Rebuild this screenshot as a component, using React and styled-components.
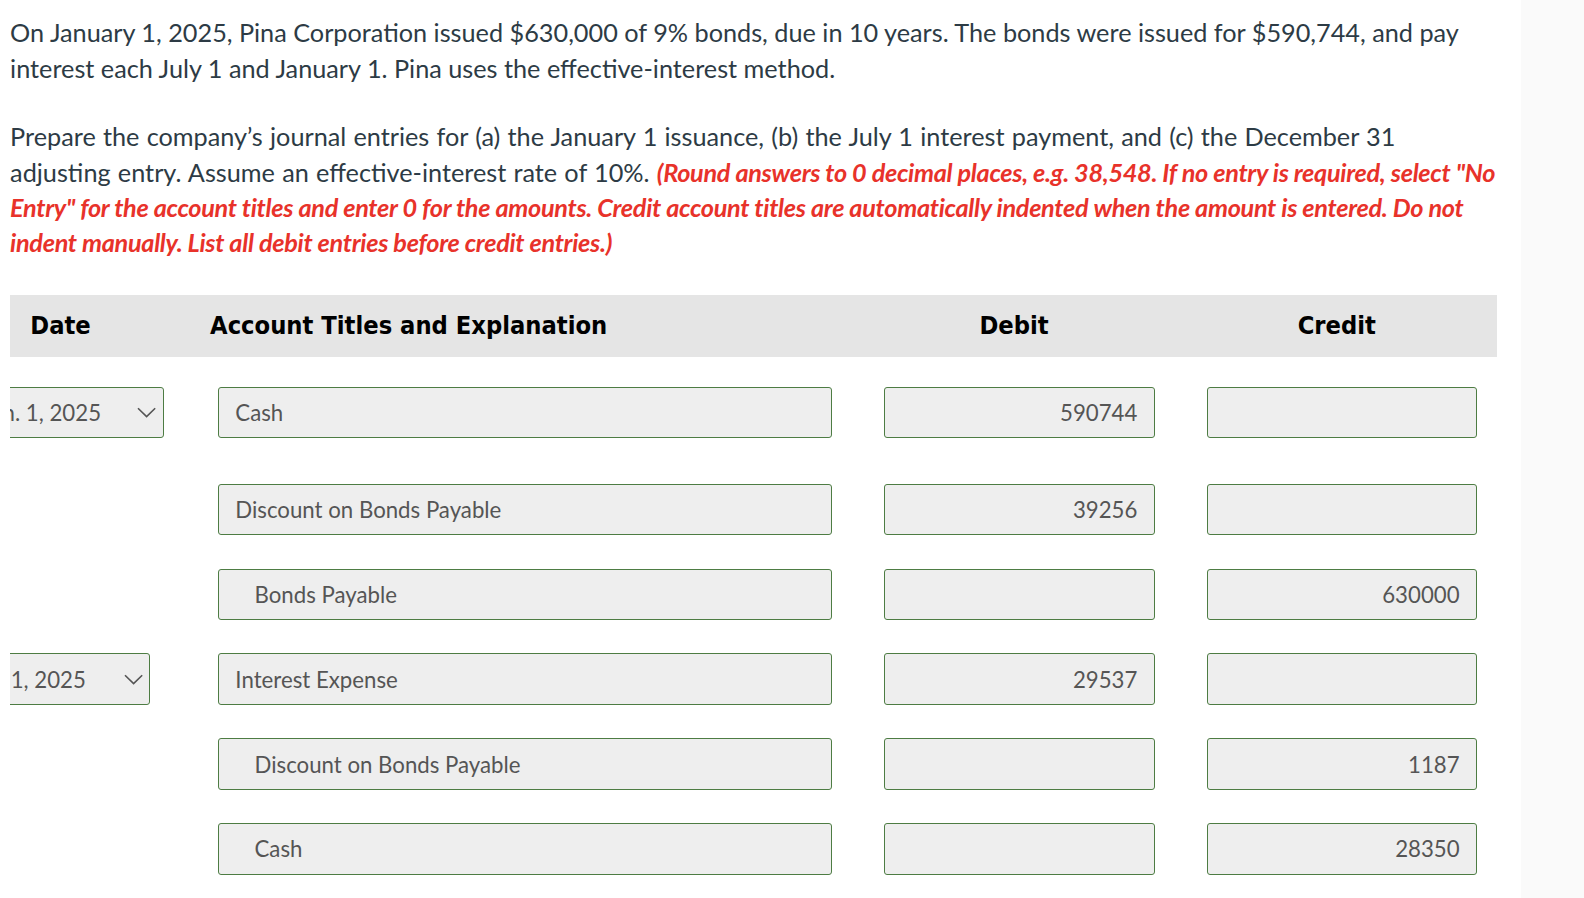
import React from 'react';
import styled, { createGlobalStyle } from 'styled-components';

const GlobalStyle = createGlobalStyle`
  html, body {
    margin: 0;
    padding: 0;
    background: #ffffff;
    overflow: hidden;
  }
  body {
    font-family: Lato, "Open Sans", sans-serif;
  }
`;

const Page = styled.div`
  zoom: 1.0101;
  display: flex;
  height: 898px;
  overflow: hidden;
`;

const Main = styled.div`
  width: 1496px;
  padding: 15px 0 0 10px;
  background: #ffffff;
`;

const SideStrip = styled.div`
  flex: 1;
  background: #fafafa;
`;

const Paragraph = styled.p`
  margin: 0 0 33px 0;
  width: 1472px;
  font-size: 25px;
  line-height: 35px;
  color: #2d3b45;
  word-spacing: ${(p) => (p.$loose ? '0.75px' : '0')};
`;

const Note = styled.span`
  color: #e8322a;
  font-weight: 700;
  font-style: italic;
  letter-spacing: -0.3px;
  word-spacing: 0;
`;

const Table = styled.div`
  width: 1472px;
  margin-top: 34px;
`;

const HeaderRow = styled.div`
  display: grid;
  grid-template-columns: 198px 662px 268px 52px 267px;
  align-items: center;
  height: 61px;
  background: #e5e5e5;
`;

const HeaderCell = styled.div`
  font-family: "DejaVu Sans Condensed", "DejaVu Sans", sans-serif;
  font-weight: 700;
  font-size: 25px;
  color: #000000;
  padding-left: ${(p) => (p.$first ? '20px' : '0')};
  text-align: ${(p) => (p.$center ? 'center' : 'left')};
  grid-column: ${(p) => p.$col || 'auto'};
`;

const Rows = styled.div`
  display: flex;
  flex-direction: column;
  gap: 33px;
  padding-top: 30px;
`;

const Row = styled.div`
  display: grid;
  grid-template-columns: 206px 608px 51px 268px 52px 267px;
  align-items: center;
  margin-bottom: ${(p) => (p.$extra ? '12px' : '0')};
`;

const DateCell = styled.div`
  width: ${(p) => p.$width}px;
  display: flex;
  justify-content: flex-end;
  overflow: hidden;
`;

const DateSelect = styled.div`
  flex-shrink: 0;
  display: flex;
  align-items: center;
  gap: ${(p) => p.$gap}px;
  height: 51px;
  box-sizing: border-box;
  padding: 0 6px 0 14px;
  border: 1px solid #4d7c43;
  border-radius: 3px;
  background: #eeeeee;
  font-size: 22px;
  color: #555555;
  white-space: nowrap;
`;

const Field = styled.div`
  grid-column: ${(p) => p.$col};
  height: 51px;
  box-sizing: border-box;
  display: flex;
  align-items: center;
  justify-content: ${(p) => (p.$number ? 'flex-end' : 'flex-start')};
  padding: ${(p) => (p.$number ? '0 16px 0 0' : p.$indent ? '0 0 0 35px' : '0 0 0 16px')};
  border: 1px solid #4d7c43;
  border-radius: 3px;
  background: #eeeeee;
  font-size: 22px;
  color: #555555;
  white-space: nowrap;
`;

const Chevron = () => (
  <svg width="19" height="11" viewBox="0 0 19 11" fill="none">
    <path d="M1 1.2 L9.5 9.5 L18 1.2" stroke="#555555" strokeWidth="1.6" />
  </svg>
);

const entries = [
  { date: 'Jan. 1, 2025', dateWidth: 152, gap: 36, account: 'Cash', debit: '590744', credit: '', extra: true },
  { account: 'Discount on Bonds Payable', debit: '39256', credit: '' },
  { account: 'Bonds Payable', indent: true, debit: '', credit: '630000' },
  { date: 'July 1, 2025', dateWidth: 139, gap: 38, account: 'Interest Expense', debit: '29537', credit: '' },
  { account: 'Discount on Bonds Payable', indent: true, debit: '', credit: '1187' },
  { account: 'Cash', indent: true, debit: '', credit: '28350' },
];

const App = () => (
  <Page>
    <GlobalStyle />
    <Main>
      <Paragraph>
        On January 1, 2025, Pina Corporation issued $630,000 of 9% bonds, due in 10 years. The bonds were
        issued for $590,744, and pay interest each July 1 and January 1. Pina uses the effective-interest
        method.
      </Paragraph>
      <Paragraph $loose>
        Prepare the company’s journal entries for (a) the January 1 issuance, (b) the July 1 interest
        payment, and (c) the December 31 adjusting entry. Assume an effective-interest rate of 10%.{' '}
        <Note>
          (Round answers to 0 decimal places, e.g. 38,548. If no entry is required, select "No Entry" for
          the account titles and enter 0 for the amounts. Credit account titles are automatically indented
          when the amount is entered. Do not indent manually. List all debit entries before credit
          entries.)
        </Note>
      </Paragraph>
      <Table>
        <HeaderRow>
          <HeaderCell $first>Date</HeaderCell>
          <HeaderCell>Account Titles and Explanation</HeaderCell>
          <HeaderCell $center>Debit</HeaderCell>
          <HeaderCell $center $col="5">Credit</HeaderCell>
        </HeaderRow>
        <Rows>
          {entries.map((e, i) => (
            <Row key={i} $extra={e.extra}>
              {e.date ? (
                <DateCell $width={e.dateWidth}>
                  <DateSelect $gap={e.gap}>
                    <span>{e.date}</span>
                    <Chevron />
                  </DateSelect>
                </DateCell>
              ) : (
                <div />
              )}
              <Field $col="2" $indent={e.indent}>{e.account}</Field>
              <Field $col="4" $number>{e.debit}</Field>
              <Field $col="6" $number>{e.credit}</Field>
            </Row>
          ))}
        </Rows>
      </Table>
    </Main>
    <SideStrip />
  </Page>
);

export default App;
